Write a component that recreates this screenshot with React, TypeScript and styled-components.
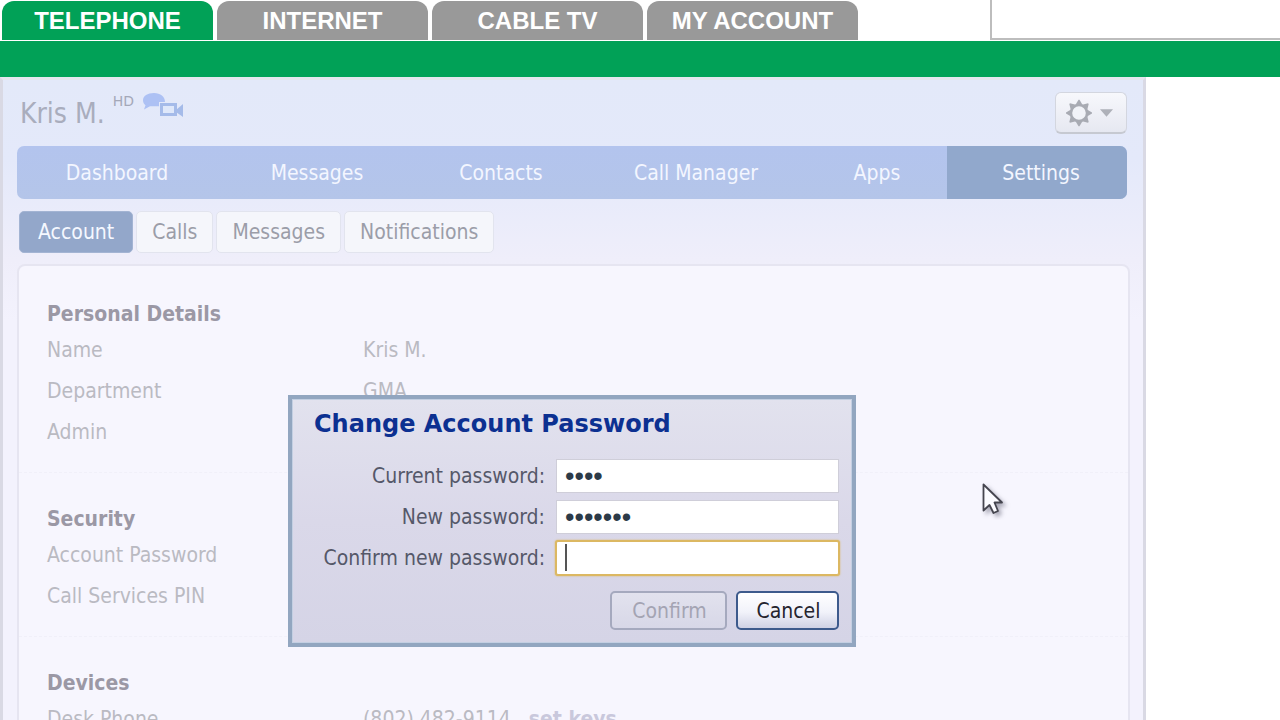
import React from "react";
import styled, { createGlobalStyle, css } from "styled-components";

const uiFont = `"DejaVu Sans Condensed", "Noto Sans", sans-serif`;
const wideFont = `"DejaVu Sans", sans-serif`;

const GlobalStyle = createGlobalStyle`
  *, *::before, *::after { box-sizing: border-box; }
  body {
    margin: 0;
    background: #fff;
    font-family: ${uiFont};
    font-size: 21px;
    color: #babac2;
  }
  h1, h2, dl, dt, dd { margin: 0; }
`;

const Page = styled.div`
  height: 100vh;
  overflow: hidden;
`;

const SiteHeader = styled.header`
  display: flex;
  height: 40px;
`;

const SiteTabs = styled.nav`
  display: flex;
  gap: 4px;
  padding: 1px 0 0 2px;
`;

const SiteTab = styled.a<{ $active?: boolean }>`
  width: 211px;
  height: 39px;
  border-radius: 12px 12px 0 0;
  background: ${(p) => (p.$active ? "#01a157" : "#999")};
  color: #fff;
  font: bold 24px/40px "Liberation Sans", sans-serif;
  text-align: center;
  text-decoration: none;
`;

const HeaderBox = styled.div`
  flex: 1;
  margin-left: 132px;
  border: solid #bdbdbd;
  border-width: 0 0 2px 2px;
`;

const GreenBar = styled.div`
  height: 36px;
  margin-top: 1px;
  background: #01a157;
`;

const Panel = styled.main`
  position: relative;
  max-width: 1146px;
  min-height: 760px;
  padding: 14px 16px 0 14px;
  border: solid #d9d9e4;
  border-width: 3px 3px 0 3px;
  border-top-color: #e4e6ee;
  background: linear-gradient(#e3e9f9 0, #e4e9fa 80px, #efeefa 180px, #f3f2fd 240px);
`;

const UserRow = styled.div`
  display: flex;
  align-items: flex-start;
  height: 52px;
  padding-left: 3px;
`;

const UserName = styled.h1`
  font-size: 28px;
  font-weight: normal;
  line-height: 40px;
  color: #a9adbd;
`;

const HdMark = styled.span`
  margin: 0 8px;
  font: 14px/14px ${wideFont};
  color: #a4a8b8;
`;

const GearButton = styled.button`
  display: flex;
  align-items: center;
  justify-content: center;
  gap: 8px;
  width: 72px;
  height: 42px;
  margin: -2px 0 0 auto;
  padding: 0 4px 0 0;
  border: 1px solid #d3d6df;
  border-bottom: 2px solid #c6c9d1;
  border-radius: 6px;
  background: linear-gradient(#f7f8fc, #e6e8f1);
`;

const MainNav = styled.nav`
  display: grid;
  grid-template-columns: 200fr 200fr 168fr 222fr 140fr 180fr;
  height: 53px;
  overflow: hidden;
  border-radius: 7px;
  background: linear-gradient(#b3c4ee, #b4c5e9);
`;

const MainLink = styled.a<{ $active?: boolean }>`
  color: #f3f6ff;
  line-height: 54px;
  text-align: center;
  text-decoration: none;
  ${(p) =>
    p.$active &&
    css`
      padding-left: 8px;
      background: #91a8cc;
    `}
`;

const SubNav = styled.nav`
  display: flex;
  gap: 3px;
  padding: 12px 0 11px 2px;
`;

const SubLink = styled.a<{ $active?: boolean }>`
  height: 42px;
  padding: 0 ${(p) => (p.$active ? 18 : 15)}px;
  border: 1px solid ${(p) => (p.$active ? "#a3b4d3" : "#e2e4ee")};
  border-radius: 5px;
  background: ${(p) => (p.$active ? "#93a7ca" : "#f5f6fb")};
  color: ${(p) => (p.$active ? "#f5f8ff" : "#9b9da8")};
  line-height: 40px;
  text-decoration: none;
`;

const Card = styled.div`
  margin-right: -3px;
  min-height: 520px;
  padding: 32px 0 0;
  border: 2px solid #e6e5f1;
  border-radius: 8px;
  background: #f7f6fe;
`;

const Section = styled.section`
  padding: 0 28px 19px;
  & + & {
    padding-top: 30px;
    border-top: 1px dashed #f1f0f9;
  }
`;

const SectionTitle = styled.h2`
  font-size: 21px;
  line-height: 32px;
  color: #9b98a5;
`;

const Row = styled.div`
  display: flex;
  line-height: 41px;
  & > dt { width: 316px; }
`;

const KeysLink = styled.a`
  margin-left: 18px;
  color: #c9c8dc;
  font-weight: bold;
  text-decoration: none;
`;

const DialogLayer = styled.div`
  position: absolute;
  inset: 315px 2px auto 0;
  display: flex;
  justify-content: center;
`;

const Dialog = styled.form`
  width: 568px;
  height: 252px;
  padding: 9px 13px 0 22px;
  border: 4px solid #92a6c0;
  box-shadow: inset 0 0 0 1px #c3cfe2;
  background: linear-gradient(#e2e2ee, #dad8e9 50%, #d5d4e6);
  color: #555869;
`;

const DialogTitle = styled.h2`
  font: bold 24px/32px ${wideFont};
  color: #0c3091;
`;

const Field = styled.div`
  display: flex;
  align-items: center;
  justify-content: flex-end;
  gap: 11px;
  height: 34px;
  margin-bottom: 7px;
  ${DialogTitle} + & { margin-top: 19px; }
`;

const PasswordInput = styled.input<{ $current?: boolean }>`
  width: 283px;
  height: 34px;
  padding: 0 8px;
  border: 1px solid #cfced9;
  outline: 0;
  background: #fff;
  color: #2c3a48;
  font: 27px/30px "Liberation Sans", sans-serif;
  caret-color: transparent;
  ${(p) =>
    p.$current &&
    css`
      border-color: #dcb862;
      border-radius: 2px;
      box-shadow: 0 0 0 1px #dcb862, 0 0 2px 1px #dcb862;
      background: linear-gradient(#555, #555) 8px 2px / 2px 27px no-repeat #fff;
    `}
`;

const Actions = styled.div`
  display: flex;
  justify-content: flex-end;
  gap: 9px;
  margin-top: 16px;
`;

const DialogButton = styled.button`
  width: 103px;
  height: 39px;
  padding: 0 0 0 2px;
  border: 2px solid #3d5a8c;
  border-radius: 5px;
  background: linear-gradient(#fff, #f1f2fa 55%, #cfd1e4);
  color: #24242e;
  font: 21px/32px ${uiFont};
  &:disabled {
    width: 117px;
    border-color: #a5a9be;
    background: linear-gradient(#e2e2ee, #d7d7e7);
    color: #a4a4b3;
  }
`;

const Pointer = styled.svg`
  position: absolute;
  left: 978px;
  top: 400px;
`;

const PointerShape = styled.path`
  filter: drop-shadow(3px 3px 2px rgba(90, 90, 110, 0.5));
`;

const navItems = ["Dashboard", "Messages", "Contacts", "Call Manager", "Apps", "Settings"];
const subItems = ["Account", "Calls", "Messages", "Notifications"];
const siteItems = ["TELEPHONE", "INTERNET", "CABLE TV", "MY ACCOUNT"];

const IconSvg = styled.svg`
  margin-top: -2px;
`;

const ChatVideoIcon = () => (
  <IconSvg width="42" height="28" viewBox="0 0 42 28" aria-hidden="true">
    <path d="M12 1C5.500 1 1 4 1 8.200c0 2.300 1 3.800 2.500 5L2 17.500l6-3.200h9V10h6C23 4.500 18.500 1 12 1z" fill="#adc1f4" />
    <rect x="19.500" y="12.500" width="14" height="10" fill="#dfe8fa" stroke="#a5bbe9" strokeWidth="3" />
    <path d="M34 18l7-6v13l-7-5z" fill="#a5bbe9" />
  </IconSvg>
);

const teeth = [0, 45, 90, 135, 180, 225, 270, 315];

const GearIcon = () => (
  <svg width="26" height="28" viewBox="-13 -14 26 28" aria-hidden="true">
    <circle r="8" fill="#f1f3f8" stroke="#a8abb3" strokeWidth="2.400" />
    {teeth.map((angle) => (
      <path key={angle} d="M-3.600 -8L-0.500 -13.200h1L3.600 -8z" fill="#a8abb3" transform={`rotate(${angle})`} />
    ))}
  </svg>
);

export default function App() {
  return (
    <Page>
      <GlobalStyle />
      <SiteHeader>
        <SiteTabs>
          {siteItems.map((item, i) => (
            <SiteTab key={item} href="#" $active={i === 0}>{item}</SiteTab>
          ))}
        </SiteTabs>
        <HeaderBox />
      </SiteHeader>
      <GreenBar />
      <Panel>
        <UserRow>
          <UserName>Kris M.</UserName>
          <HdMark>HD</HdMark>
          <ChatVideoIcon />
          <GearButton type="button" aria-label="Options">
            <GearIcon />
            <svg width="13" height="8" viewBox="0 0 14 8" aria-hidden="true">
              <path d="M0 0h14L7 8z" fill="#aeb1b9" />
            </svg>
          </GearButton>
        </UserRow>
        <MainNav>
          {navItems.map((item) => (
            <MainLink key={item} href="#" $active={item === "Settings"}>{item}</MainLink>
          ))}
        </MainNav>
        <SubNav>
          {subItems.map((item) => (
            <SubLink key={item} href="#" $active={item === "Account"}>{item}</SubLink>
          ))}
        </SubNav>
        <Card>
          <Section>
            <SectionTitle>Personal Details</SectionTitle>
            <dl>
              <Row><dt>Name</dt><dd>Kris M.</dd></Row>
              <Row><dt>Department</dt><dd>GMA</dd></Row>
              <Row><dt>Admin</dt></Row>
            </dl>
          </Section>
          <Section>
            <SectionTitle>Security</SectionTitle>
            <dl>
              <Row><dt>Account Password</dt></Row>
              <Row><dt>Call Services PIN</dt></Row>
            </dl>
          </Section>
          <Section>
            <SectionTitle>Devices</SectionTitle>
            <dl>
              <Row>
                <dt>Desk Phone</dt>
                <dd>(802) 482-9114<KeysLink href="#">set keys</KeysLink></dd>
              </Row>
            </dl>
          </Section>
        </Card>
        <DialogLayer>
          <Dialog role="dialog" aria-labelledby="dialog-title">
            <DialogTitle id="dialog-title">Change Account Password</DialogTitle>
            <Field>
              <label htmlFor="current">Current password:</label>
              <PasswordInput id="current" type="password" defaultValue="1234" />
            </Field>
            <Field>
              <label htmlFor="new">New password:</label>
              <PasswordInput id="new" type="password" defaultValue="1234567" />
            </Field>
            <Field>
              <label htmlFor="confirm">Confirm new password:</label>
              <PasswordInput id="confirm" type="password" $current />
            </Field>
            <Actions>
              <DialogButton type="submit" disabled>Confirm</DialogButton>
              <DialogButton type="button">Cancel</DialogButton>
            </Actions>
          </Dialog>
        </DialogLayer>
        <Pointer width="30" height="40" viewBox="0 0 30 40" aria-hidden="true">
          <PointerShape
            d="M2.500 4.500v26l6-5.500 4 8 4.500-2-3.500-8.500h7.500z"
            fill="#fbfbff"
            stroke="#45454f"
            strokeWidth="1.800"
            strokeLinejoin="round"
          />
        </Pointer>
      </Panel>
    </Page>
  );
}
